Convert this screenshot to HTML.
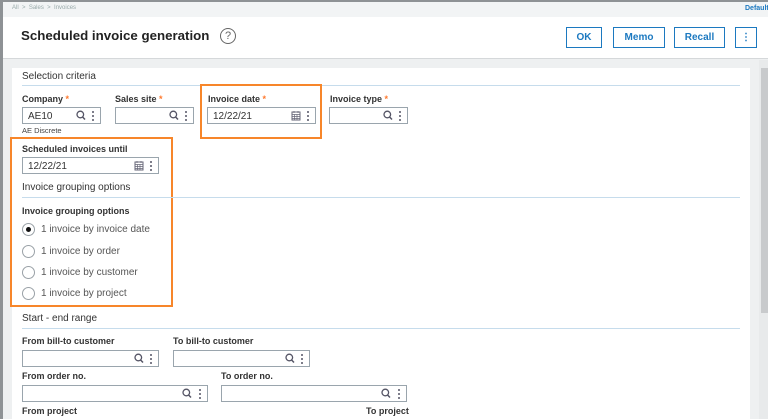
<!DOCTYPE html>
<html><head><meta charset="utf-8"><style>
*{margin:0;padding:0;box-sizing:border-box}
body{width:768px;height:419px;overflow:hidden;background:#eef0f1;font-family:"Liberation Sans",sans-serif;position:relative;color:#222}
.a{position:absolute}
.lbl{position:absolute;font-size:9px;font-weight:bold;color:#333}
.lbl b{color:#ff7a2e;font-weight:bold}
.inp{position:absolute;height:17px;border:1px solid #9aa5ad;background:#fff;font-size:10px;color:#333;padding:3px 0 0 5px}
.ic{position:absolute;top:2px;width:10px;height:11px}
.dots{position:absolute;top:3px;width:2px;height:10px}
.dots i{display:block;width:2px;height:2px;background:#556;margin-bottom:2px;border-radius:1px}
.sec{position:absolute;font-size:10px;color:#333}
.line{position:absolute;height:1px;background:#c6dcec}
.btn{position:absolute;top:27px;height:21px;border:1px solid #1c79c0;color:#1c79c0;font-size:10px;font-weight:bold;text-align:center;line-height:19px;background:#fff}
.orange{position:absolute;border:2px solid #f7862a}
.rad{position:absolute;left:22px;width:13px;height:13px;border:1px solid #9aa1a7;border-radius:50%;background:#fff}
.rt{position:absolute;left:41px;font-size:10px;color:#555}
</style></head><body>
<div class="a" style="left:0;top:0;width:768px;height:2px;background:#8e9295"></div>
<div class="a" style="left:0;top:2px;width:3px;height:417px;background:#8e9295"></div>
<div class="a" style="left:3px;top:2px;width:765px;height:15px;background:#f2f4f5"></div>
<div class="a" style="left:12px;top:5px;font-size:6px;color:#9aa">All &nbsp;&gt;&nbsp; Sales &nbsp;&gt;&nbsp; Invoices</div>
<div class="a" style="left:745px;top:5px;font-size:7px;color:#1c79c0;font-weight:bold">Default</div>
<div class="a" style="left:3px;top:17px;width:765px;height:42px;background:#fff;border-bottom:1px solid #d5d8da"></div>
<div class="a" style="left:21px;top:28px;font-size:13.3px;font-weight:bold;color:#222">Scheduled invoice generation</div>
<div class="a" style="left:220px;top:28px;width:16px;height:16px;border:1.3px solid #666;border-radius:50%;font-size:11px;color:#666;text-align:center;line-height:14px">?</div>
<div class="btn" style="left:566px;width:36px">OK</div>
<div class="btn" style="left:613px;width:52px">Memo</div>
<div class="btn" style="left:674px;width:51px">Recall</div>
<div class="btn" style="left:735px;width:22px">&#8942;</div>
<div class="a" style="left:759px;top:60px;width:9px;height:359px;background:#e8eaeb"></div>
<div class="a" style="left:761px;top:68px;width:7px;height:245px;background:#c8cacc"></div>
<div class="a" style="left:12px;top:68px;width:738px;height:351px;background:#fff"></div>

<div class="sec" style="left:22px;top:71px">Selection criteria</div>
<div class="line" style="left:22px;top:85px;width:718px"></div>

<div class="lbl" style="left:22px;top:94px">Company <b>*</b></div>
<div class="inp" style="left:22px;top:107px;width:79px">AE10<svg class="ic" style="left:53px" viewBox="0 0 10 11"><circle cx="4.3" cy="4.5" r="3.3" fill="none" stroke="#556" stroke-width="1.3"/><path d="M6.6 7 9 9.5" stroke="#556" stroke-width="1.5"/></svg><div class="dots" style="left:69px"><i></i><i></i><i></i></div></div>
<div class="a" style="left:22px;top:126px;font-size:7.5px;color:#444">AE Discrete</div>

<div class="lbl" style="left:115px;top:94px">Sales site <b>*</b></div>
<div class="inp" style="left:115px;top:107px;width:79px"><svg class="ic" style="left:53px" viewBox="0 0 10 11"><circle cx="4.3" cy="4.5" r="3.3" fill="none" stroke="#556" stroke-width="1.3"/><path d="M6.6 7 9 9.5" stroke="#556" stroke-width="1.5"/></svg><div class="dots" style="left:69px"><i></i><i></i><i></i></div></div>

<div class="orange" style="left:200px;top:84px;width:122px;height:55px"></div>
<div class="lbl" style="left:208px;top:94px">Invoice date <b>*</b></div>
<div class="inp" style="left:207px;top:107px;width:109px">12/22/21<svg class="ic" style="left:83px" viewBox="0 0 10 11"><rect x="1" y="2" width="8" height="8" fill="none" stroke="#667" stroke-width="1"/><path d="M1 4.5h8M3 1v2M7 1v2M1 6.5h8M1 8.5h8M3.5 4.5v5M6 4.5v5" stroke="#667" stroke-width=".7"/></svg><div class="dots" style="left:99px"><i></i><i></i><i></i></div></div>

<div class="lbl" style="left:330px;top:94px">Invoice type <b>*</b></div>
<div class="inp" style="left:329px;top:107px;width:79px"><svg class="ic" style="left:53px" viewBox="0 0 10 11"><circle cx="4.3" cy="4.5" r="3.3" fill="none" stroke="#556" stroke-width="1.3"/><path d="M6.6 7 9 9.5" stroke="#556" stroke-width="1.5"/></svg><div class="dots" style="left:69px"><i></i><i></i><i></i></div></div>

<div class="orange" style="left:10px;top:137px;width:163px;height:170px"></div>
<div class="lbl" style="left:22px;top:144px">Scheduled invoices until</div>
<div class="inp" style="left:22px;top:157px;width:137px">12/22/21<svg class="ic" style="left:111px" viewBox="0 0 10 11"><rect x="1" y="2" width="8" height="8" fill="none" stroke="#667" stroke-width="1"/><path d="M1 4.5h8M3 1v2M7 1v2M1 6.5h8M1 8.5h8M3.5 4.5v5M6 4.5v5" stroke="#667" stroke-width=".7"/></svg><div class="dots" style="left:127px"><i></i><i></i><i></i></div></div>
<div class="sec" style="left:22px;top:182px">Invoice grouping options</div>
<div class="line" style="left:22px;top:197px;width:718px"></div>
<div class="lbl" style="left:22px;top:206px">Invoice grouping options</div>
<div class="rad" style="top:223px"><div style="width:5px;height:5px;background:#111;border-radius:50%;margin:3px"></div></div><div class="rt" style="top:224px">1 invoice by invoice date</div>
<div class="rad" style="top:245px"></div><div class="rt" style="top:246px">1 invoice by order</div>
<div class="rad" style="top:266px"></div><div class="rt" style="top:267px">1 invoice by customer</div>
<div class="rad" style="top:287px"></div><div class="rt" style="top:288px">1 invoice by project</div>

<div class="sec" style="left:22px;top:313px">Start - end range</div>
<div class="line" style="left:22px;top:328px;width:718px"></div>
<div class="lbl" style="left:22px;top:336px">From bill-to customer</div>
<div class="inp" style="left:22px;top:350px;width:137px"><svg class="ic" style="left:111px" viewBox="0 0 10 11"><circle cx="4.3" cy="4.5" r="3.3" fill="none" stroke="#556" stroke-width="1.3"/><path d="M6.6 7 9 9.5" stroke="#556" stroke-width="1.5"/></svg><div class="dots" style="left:127px"><i></i><i></i><i></i></div></div>
<div class="lbl" style="left:173px;top:336px">To bill-to customer</div>
<div class="inp" style="left:173px;top:350px;width:137px"><svg class="ic" style="left:111px" viewBox="0 0 10 11"><circle cx="4.3" cy="4.5" r="3.3" fill="none" stroke="#556" stroke-width="1.3"/><path d="M6.6 7 9 9.5" stroke="#556" stroke-width="1.5"/></svg><div class="dots" style="left:127px"><i></i><i></i><i></i></div></div>
<div class="lbl" style="left:22px;top:371px">From order no.</div>
<div class="inp" style="left:22px;top:385px;width:186px"><svg class="ic" style="left:159px" viewBox="0 0 10 11"><circle cx="4.3" cy="4.5" r="3.3" fill="none" stroke="#556" stroke-width="1.3"/><path d="M6.6 7 9 9.5" stroke="#556" stroke-width="1.5"/></svg><div class="dots" style="left:176px"><i></i><i></i><i></i></div></div>
<div class="lbl" style="left:221px;top:371px">To order no.</div>
<div class="inp" style="left:221px;top:385px;width:186px"><svg class="ic" style="left:159px" viewBox="0 0 10 11"><circle cx="4.3" cy="4.5" r="3.3" fill="none" stroke="#556" stroke-width="1.3"/><path d="M6.6 7 9 9.5" stroke="#556" stroke-width="1.5"/></svg><div class="dots" style="left:176px"><i></i><i></i><i></i></div></div>
<div class="lbl" style="left:22px;top:406px">From project</div>
<div class="lbl" style="left:366px;top:406px">To project</div>
</body></html>
